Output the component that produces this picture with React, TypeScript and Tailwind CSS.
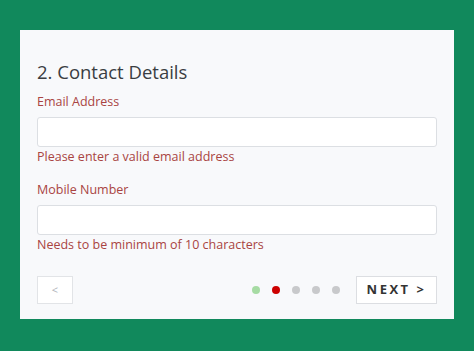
import React from 'react';

const Field: React.FC<{ label: string; error: string }> = ({ label, error }) => (
  <div>
    <label className="block text-[12.5px] leading-[18px] text-[#a94442]">{label}</label>
    <input
      type="text"
      className="mt-[6px] block h-[30px] w-full rounded-[3px] border border-[#dcdfe3] bg-white px-2 text-[13px] outline-none"
    />
    <p className="mt-[1px] text-[12.5px] leading-[18px] text-[#a94442]">{error}</p>
  </div>
);

const dots = ['bg-[#a6dba3]', 'bg-[#cc0000]', 'bg-[#c8c9cb]', 'bg-[#c8c9cb]', 'bg-[#c8c9cb]'];

export default function App() {
  return (
    <div
      className="h-[351px] w-[474px] bg-[#11895c] px-5 pt-[30px]"
      style={{ fontFamily: '"Segoe UI", "Open Sans", sans-serif' }}
    >
      <div className="h-[289px] w-[434px] bg-[#f8f9fb] px-[17px] pt-[29px]">
        <h2 className="text-[18.5px] leading-[26px] text-[#3a3d42]">2. Contact Details</h2>
        <div className="mt-[8px] space-y-[15px]">
          <Field label="Email Address" error="Please enter a valid email address" />
          <Field label="Mobile Number" error="Needs to be minimum of 10 characters" />
        </div>

        <div className="mt-[22px] flex items-center justify-between">
          <button className="h-[28px] w-[36px] border border-[#e2e4e7] bg-white text-[11px] text-[#b0b3b8]">
            &lt;
          </button>
          <div className="flex items-center">
            <div className="mr-[16px] flex items-center gap-[12px]">
              {dots.map((c, i) => (
                <span key={i} className={`h-[8px] w-[8px] rounded-full ${c}`} />
              ))}
            </div>
            <button className="h-[28px] w-[81px] border border-[#dcdee2] bg-white text-[13px] font-bold tracking-[2.5px] text-[#333]">
              NEXT &gt;
            </button>
          </div>
        </div>
      </div>
    </div>
  );
}
